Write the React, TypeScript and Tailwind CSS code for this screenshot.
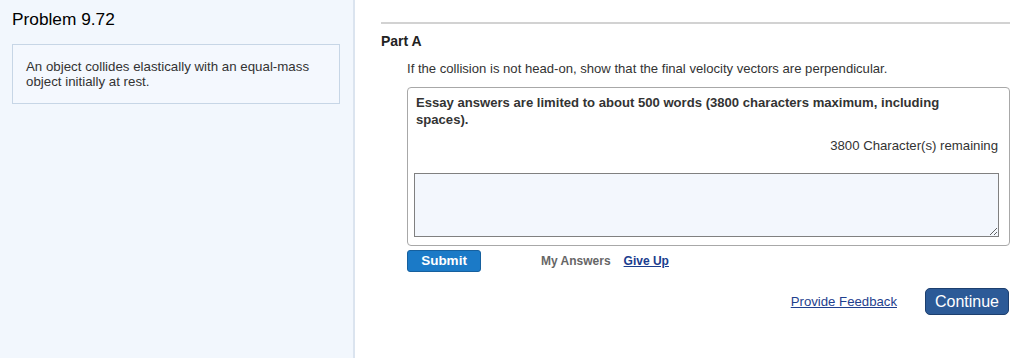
import React from 'react';

const App: React.FC = () => {
  return (
    <div className="flex h-[358px] w-[1024px] font-['Liberation_Sans',Arial,sans-serif] text-[#222]">
      {/* problem sidebar */}
      <aside className="w-[355px] shrink-0 border-r-2 border-[#dbe4ef] bg-[#f2f7fd] pl-3 pr-[13px] pt-[9px]">
        <h1 className="text-[17.3px] leading-[20px] text-black">Problem 9.72</h1>
        <div className="mt-[15px] h-[60px] border border-[#c7d6e6] bg-[#f4f8fe] px-[13px] pt-[14px] text-[13.3px] leading-[15px] text-[#333]">
          An object collides elastically with an equal-mass object initially at rest.
        </div>
      </aside>

      {/* part A */}
      <main className="flex-1 bg-white pl-[26px] pr-[14px] pt-[22px]">
        <div className="h-[2px] bg-[#d2d2d2]" />
        <h2 className="mt-[9px] text-[14px] font-bold leading-[16px] text-[#222]">Part A</h2>
        <div className="pl-[26px]">
          <p className="mt-[12px] text-[13.1px] leading-[15px] text-[#333]">
            If the collision is not head-on, show that the final velocity vectors are perpendicular.
          </p>
          <div className="mt-[11px] h-[159px] rounded-[4px] border border-[#a8a8a8] pl-[6px] pr-[10px] pt-[6px]">
            <p className="pl-[2px] text-[13.1px] font-bold leading-[17px] text-[#333]">
              Essay answers are limited to about 500 words (3800 characters maximum, including
              <br />
              spaces).
            </p>
            <p className="mt-[10px] pr-[1px] text-right text-[13.2px] leading-[15px] text-[#333]">
              3800 Character(s) remaining
            </p>
            <textarea
              className="mt-[20px] block h-[64px] w-full resize-y border border-[#808080] bg-[#f3f7fd] outline-none"
              aria-label="answer"
            />
          </div>
          <div className="mt-[4px] flex items-center">
            <button className="h-[22px] w-[74px] rounded-[3px] border border-[#16609e] bg-[#1b7ac7] text-[13.5px] font-bold leading-none text-white">
              Submit
            </button>
            <span className="ml-[60px] text-[12px] font-bold text-[#666]">My Answers</span>
            <a href="#" className="ml-[13px] text-[12px] font-bold text-[#1a3c8e] underline">
              Give Up
            </a>
          </div>
          <div className="mt-[16px] flex items-center justify-end pr-[1px]">
            <a href="#" className="text-[13.2px] text-[#1f3f8e] underline">
              Provide Feedback
            </a>
            <button className="ml-[28px] h-[27px] w-[84px] rounded-[5px] border border-[#1d3f6e] bg-[#2c5a97] text-[16px] leading-none text-white">
              Continue
            </button>
          </div>
        </div>
      </main>
    </div>
  );
};

export default App;
